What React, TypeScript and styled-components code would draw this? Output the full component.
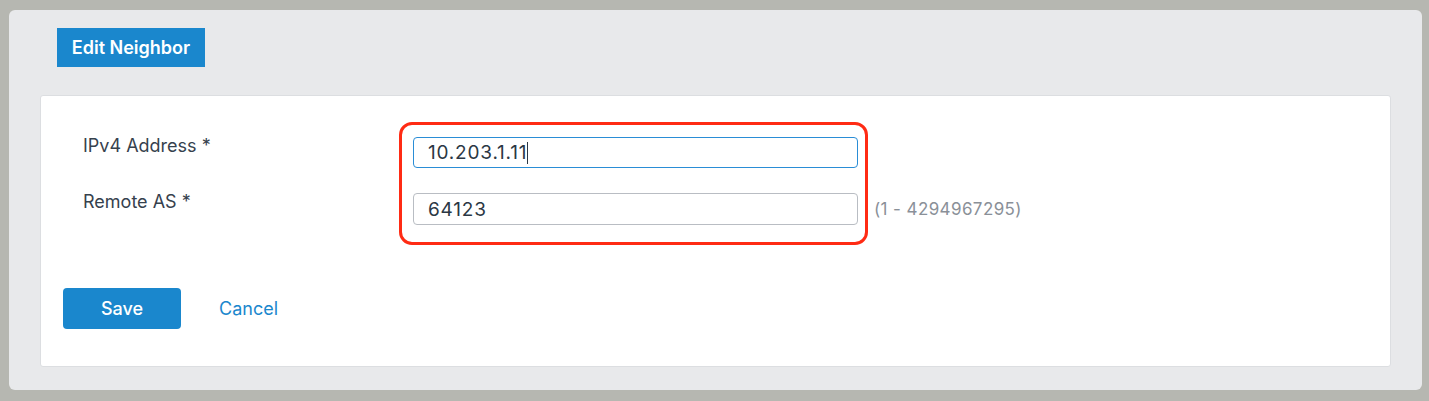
import React from "react";
import styled, { createGlobalStyle } from "styled-components";

const Global = createGlobalStyle`
  html, body { margin: 0; padding: 0; }
  body {
    background: #b6b7b1;
    font-family: Inter, "Liberation Sans", Arial, sans-serif;
    -webkit-font-smoothing: antialiased;
  }
`;

const Page = styled.div`
  padding: 10px 7px 11px 9px;
  height: 401px;
  box-sizing: border-box;
`;

const Panel = styled.div`
  background: #e8e9eb;
  border-radius: 6px;
  height: 380px;
  box-sizing: border-box;
  padding: 18px 31px 23px 31px;
  display: flex;
  flex-direction: column;
`;

const Tab = styled.div`
  align-self: flex-start;
  margin-left: 17px;
  width: 148px;
  height: 39px;
  background: #1a87cd;
  color: #fff;
  font-size: 18px;
  font-weight: 600;
  display: flex;
  align-items: center;
  justify-content: center;
`;

const Card = styled.div`
  margin-top: 28px;
  flex: 1;
  background: #fff;
  border: 1px solid #dcdee1;
  border-radius: 3px;
  padding: 41px 22px 0 22px;
  display: flex;
  flex-direction: column;
`;

const Form = styled.div`
  display: grid;
  grid-template-columns: 330px 445px auto;
  grid-template-rows: 31px 32px;
  row-gap: 25px;
  padding-left: 20px;
  position: relative;
`;

const Label = styled.div`
  font-size: 18px;
  line-height: 20px;
  color: #36414d;
  margin-top: -1px;
`;

const Input = styled.div<{ $focused?: boolean }>`
  box-sizing: border-box;
  height: 100%;
  border: 1px solid ${(p) => (p.$focused ? "#2a8dd6" : "#b9bdc3")};
  border-radius: 4px;
  padding: 0 14px;
  display: flex;
  align-items: center;
  font-size: 19px;
  letter-spacing: 0.8px;
  color: #2b3744;
`;

const Caret = styled.span`
  display: inline-block;
  width: 1px;
  height: 22px;
  background: #2b3744;
  margin-left: 0;
`;

const Hint = styled.div`
  align-self: center;
  padding-left: 16px;
  font-size: 17px;
  letter-spacing: 0.4px;
  color: #8a9098;
`;

const Highlight = styled.div`
  position: absolute;
  left: 336px;
  top: -15px;
  width: 469px;
  height: 123px;
  box-sizing: border-box;
  border: 3px solid #ff2b14;
  border-radius: 13px;
  pointer-events: none;
`;

const Actions = styled.div`
  margin-top: 63px;
  display: flex;
  align-items: center;
  gap: 38px;
`;

const SaveButton = styled.button`
  width: 118px;
  height: 41px;
  border: none;
  border-radius: 4px;
  background: #1a87cd;
  color: #fff;
  font-family: inherit;
  font-size: 18px;
  font-weight: 500;
  cursor: pointer;
`;

const CancelLink = styled.a`
  color: #1a87cd;
  font-size: 18px;
  text-decoration: none;
  cursor: pointer;
`;

export default function App() {
  return (
    <>
      <Global />
      <Page>
        <Panel>
          <Tab>Edit Neighbor</Tab>
          <Card>
            <Form>
              <Label>IPv4 Address *</Label>
              <Input $focused>
                10.203.1.11
                <Caret />
              </Input>
              <div />
              <Label>Remote AS *</Label>
              <Input>64123</Input>
              <Hint>(1 - 4294967295)</Hint>
              <Highlight />
            </Form>
            <Actions>
              <SaveButton>Save</SaveButton>
              <CancelLink>Cancel</CancelLink>
            </Actions>
          </Card>
        </Panel>
      </Page>
    </>
  );
}
